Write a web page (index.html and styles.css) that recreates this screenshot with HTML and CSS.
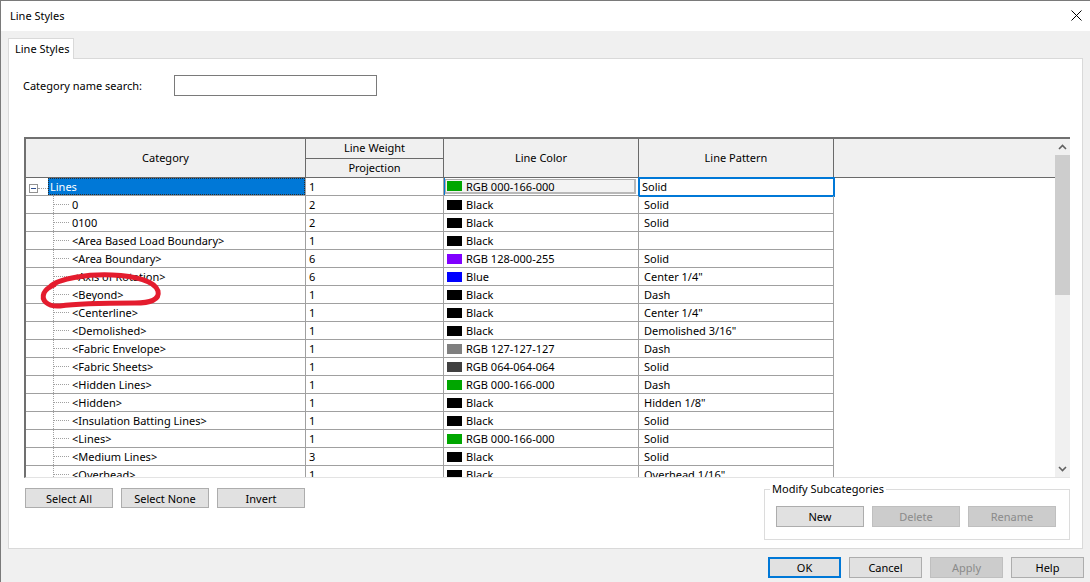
FILE: index.html
```html
<!DOCTYPE html>
<html lang="en">
<head>
  <meta charset="UTF-8" />
  <title>Line Styles</title>
  <link rel="stylesheet" href="styles.css">
</head>
<body>
  <div class="dialog">
    <div class="titlebar">
      <span class="title">Line Styles</span>
      <svg class="close" width="11" height="11" viewBox="0 0 11 11">
        <path d="M0.5 0.5 L10.5 10.5 M10.5 0.5 L0.5 10.5" stroke="#000" stroke-width="1" fill="none"/>
      </svg>
    </div>

    <div class="client">
      <div class="tabstrip">
        <div class="tab">Line Styles</div>
      </div>

      <div class="panel">
        <div class="search">
          <label>Category name search:</label>
          <div class="textbox"></div>
        </div>

        <div class="grid">
          <div class="grid-main">
            <div class="grid-head">
              <div class="th th-cat">Category</div>
              <div class="th th-weight">Line Weight</div>
              <div class="th th-proj">Projection</div>
              <div class="th th-color">Line Color</div>
              <div class="th th-pattern">Line Pattern</div>
              <div class="th th-rest"></div>
            </div>

            <div class="grid-body">
              <div class="row current">
                <div class="td c-cat root">
                  <span class="expander"><span class="minus"></span></span>
                  <span class="connector"></span>
                  <span class="selected">Lines</span>
                </div>
                <div class="td c-weight">1</div>
                <div class="td c-color">
                  <span class="color-btn"><span class="swatch" style="background:#00a600"></span>RGB 000-166-000</span>
                </div>
                <div class="td c-pattern">Solid</div>
              </div>

              <div class="row">
                <div class="td c-cat"><span class="branch"></span><span class="name">0</span></div>
                <div class="td c-weight">2</div>
                <div class="td c-color"><span class="swatch" style="background:#000000"></span>Black</div>
                <div class="td c-pattern">Solid</div>
              </div>
              <div class="row">
                <div class="td c-cat"><span class="branch"></span><span class="name">0100</span></div>
                <div class="td c-weight">2</div>
                <div class="td c-color"><span class="swatch" style="background:#000000"></span>Black</div>
                <div class="td c-pattern">Solid</div>
              </div>
              <div class="row">
                <div class="td c-cat"><span class="branch"></span><span class="name">&lt;Area Based Load Boundary&gt;</span></div>
                <div class="td c-weight">1</div>
                <div class="td c-color"><span class="swatch" style="background:#000000"></span>Black</div>
                <div class="td c-pattern"></div>
              </div>
              <div class="row">
                <div class="td c-cat"><span class="branch"></span><span class="name">&lt;Area Boundary&gt;</span></div>
                <div class="td c-weight">6</div>
                <div class="td c-color"><span class="swatch" style="background:#8000ff"></span>RGB 128-000-255</div>
                <div class="td c-pattern">Solid</div>
              </div>
              <div class="row">
                <div class="td c-cat"><span class="branch"></span><span class="name">&lt;Axis of Rotation&gt;</span></div>
                <div class="td c-weight">6</div>
                <div class="td c-color"><span class="swatch" style="background:#0000ff"></span>Blue</div>
                <div class="td c-pattern">Center 1/4"</div>
              </div>
              <div class="row">
                <div class="td c-cat"><span class="branch"></span><span class="name">&lt;Beyond&gt;</span></div>
                <div class="td c-weight">1</div>
                <div class="td c-color"><span class="swatch" style="background:#000000"></span>Black</div>
                <div class="td c-pattern">Dash</div>
              </div>
              <div class="row">
                <div class="td c-cat"><span class="branch"></span><span class="name">&lt;Centerline&gt;</span></div>
                <div class="td c-weight">1</div>
                <div class="td c-color"><span class="swatch" style="background:#000000"></span>Black</div>
                <div class="td c-pattern">Center 1/4"</div>
              </div>
              <div class="row">
                <div class="td c-cat"><span class="branch"></span><span class="name">&lt;Demolished&gt;</span></div>
                <div class="td c-weight">1</div>
                <div class="td c-color"><span class="swatch" style="background:#000000"></span>Black</div>
                <div class="td c-pattern">Demolished 3/16"</div>
              </div>
              <div class="row">
                <div class="td c-cat"><span class="branch"></span><span class="name">&lt;Fabric Envelope&gt;</span></div>
                <div class="td c-weight">1</div>
                <div class="td c-color"><span class="swatch" style="background:#7f7f7f"></span>RGB 127-127-127</div>
                <div class="td c-pattern">Dash</div>
              </div>
              <div class="row">
                <div class="td c-cat"><span class="branch"></span><span class="name">&lt;Fabric Sheets&gt;</span></div>
                <div class="td c-weight">1</div>
                <div class="td c-color"><span class="swatch" style="background:#404040"></span>RGB 064-064-064</div>
                <div class="td c-pattern">Solid</div>
              </div>
              <div class="row">
                <div class="td c-cat"><span class="branch"></span><span class="name">&lt;Hidden Lines&gt;</span></div>
                <div class="td c-weight">1</div>
                <div class="td c-color"><span class="swatch" style="background:#00a600"></span>RGB 000-166-000</div>
                <div class="td c-pattern">Dash</div>
              </div>
              <div class="row">
                <div class="td c-cat"><span class="branch"></span><span class="name">&lt;Hidden&gt;</span></div>
                <div class="td c-weight">1</div>
                <div class="td c-color"><span class="swatch" style="background:#000000"></span>Black</div>
                <div class="td c-pattern">Hidden 1/8"</div>
              </div>
              <div class="row">
                <div class="td c-cat"><span class="branch"></span><span class="name">&lt;Insulation Batting Lines&gt;</span></div>
                <div class="td c-weight">1</div>
                <div class="td c-color"><span class="swatch" style="background:#000000"></span>Black</div>
                <div class="td c-pattern">Solid</div>
              </div>
              <div class="row">
                <div class="td c-cat"><span class="branch"></span><span class="name">&lt;Lines&gt;</span></div>
                <div class="td c-weight">1</div>
                <div class="td c-color"><span class="swatch" style="background:#00a600"></span>RGB 000-166-000</div>
                <div class="td c-pattern">Solid</div>
              </div>
              <div class="row">
                <div class="td c-cat"><span class="branch"></span><span class="name">&lt;Medium Lines&gt;</span></div>
                <div class="td c-weight">3</div>
                <div class="td c-color"><span class="swatch" style="background:#000000"></span>Black</div>
                <div class="td c-pattern">Solid</div>
              </div>
              <div class="row">
                <div class="td c-cat"><span class="branch"></span><span class="name">&lt;Overhead&gt;</span></div>
                <div class="td c-weight">1</div>
                <div class="td c-color"><span class="swatch" style="background:#000000"></span>Black</div>
                <div class="td c-pattern">Overhead 1/16"</div>
              </div>
            </div>
          </div>

          <div class="vscroll">
            <div class="sb-btn">
              <svg width="9" height="6" viewBox="0 0 9 6"><path d="M1 5 L4.5 1.5 L8 5" stroke="#606060" stroke-width="1.6" fill="none"/></svg>
            </div>
            <div class="sb-thumb"></div>
            <div class="sb-track"></div>
            <div class="sb-btn">
              <svg width="9" height="6" viewBox="0 0 9 6"><path d="M1 1 L4.5 4.5 L8 1" stroke="#606060" stroke-width="1.6" fill="none"/></svg>
            </div>
          </div>
        </div>

        <div class="panel-foot">
          <div class="select-btns">
            <button class="btn wide">Select All</button>
            <button class="btn wide">Select None</button>
            <button class="btn wide">Invert</button>
          </div>
          <fieldset class="group">
            <legend>Modify Subcategories</legend>
            <button class="btn wide tall">New</button>
            <button class="btn wide tall" disabled>Delete</button>
            <button class="btn wide tall" disabled>Rename</button>
          </fieldset>
        </div>
      </div>

      <div class="footer">
        <button class="btn small default">OK</button>
        <button class="btn small">Cancel</button>
        <button class="btn small" disabled>Apply</button>
        <button class="btn small">Help</button>
      </div>
    </div>

    <!-- hand-drawn markup around <Beyond> -->
    <svg class="markup" width="1090" height="582" viewBox="0 0 1090 582">
      <path d="M50 287 C58 278, 90 274, 112 275 C135 276, 155 281, 158 291 C160 300, 150 303, 135 303 C110 303, 80 303, 60 306 C47 307, 41 300, 44 293 C46 289, 49 287, 54 285"
            stroke="#e41c2e" stroke-width="5" fill="none" stroke-linecap="round" stroke-linejoin="round"/>
    </svg>
  </div>
</body>
</html>
```

FILE: styles.css
```css
* {
  box-sizing: border-box;
}

body, html {
  margin: 0;
  padding: 0;
  overflow: hidden;
  font-family: "Noto Sans", "Segoe UI", sans-serif;
  font-size: 11px;
  color: #000;
  background: #f0f0f0;
}

.dialog {
  position: relative;
  width: 1090px;
  height: 582px;
  display: flex;
  flex-direction: column;
  border-top: 1px solid #7a7a7a;
  border-left: 1px solid #7a7a7a;
}

.titlebar {
  height: 30px;
  background: #fff;
  display: flex;
  align-items: center;
  justify-content: space-between;
  padding: 0 8px 1px 9px;
}

.close {
  display: block;
}

.client {
  flex: 1;
  display: flex;
  flex-direction: column;
  background: #f0f0f0;
}

.tabstrip {
  padding: 7px 0 0 7px;
  display: flex;
}

.tab {
  position: relative;
  z-index: 1;
  height: 21px;
  margin-bottom: -1px;
  padding: 2px 4px 0 6px;
  background: #fff;
  border: 1px solid #d9d9d9;
  border-bottom: none;
}

.panel {
  flex: 1;
  margin: 0 7px 0 7px;
  background: #fff;
  border: 1px solid #d9d9d9;
  display: flex;
  flex-direction: column;
}

.search {
  display: flex;
  align-items: center;
  margin-top: 16px;
  padding-left: 14px;
}

.search label {
  width: 151px;
  padding-bottom: 1px;
}

.textbox {
  width: 203px;
  height: 21px;
  border: 1px solid #7a7a7a;
  background: #fff;
}

/* data grid */
.grid {
  display: flex;
  height: 341px;
  margin: 41px 12px 0 15px;
  border-top: 2px solid #707070;
  border-left: 2px solid #707070;
  border-bottom: 1px solid #e3e3e3;
  background: #fff;
}

.grid-main {
  flex: 1;
  overflow: hidden;
}

.grid-head {
  display: grid;
  grid-template-columns: 280px 138px 195px 195px 1fr;
  grid-template-rows: 20px 19px;
  background: #f0f0f0;
}

.th {
  display: flex;
  align-items: center;
  justify-content: center;
  padding-bottom: 2px;
  border-right: 1px solid #6a6a6a;
  border-bottom: 1px solid #6a6a6a;
}

.th-cat { grid-column: 1; grid-row: 1 / 3; }
.th-weight { grid-column: 2; grid-row: 1; }
.th-proj { grid-column: 2; grid-row: 2; }
.th-color { grid-column: 3; grid-row: 1 / 3; }
.th-pattern { grid-column: 4; grid-row: 1 / 3; }
.th-rest { grid-column: 5; grid-row: 1 / 3; border-right: none; }

.row {
  display: grid;
  grid-template-columns: 280px 138px 195px 195px;
  height: 18px;
}

.td {
  display: flex;
  align-items: center;
  white-space: nowrap;
  overflow: hidden;
  border-right: 1px solid #a0a0a0;
  border-bottom: 1px solid #a0a0a0;
}

.c-cat {
  padding-left: 27px;
  align-items: stretch;
}

.branch {
  position: relative;
  width: 16px;
  border-left: 1px dotted #a0a0a0;
}

.branch::after {
  content: "";
  position: absolute;
  left: 0;
  right: 0;
  top: 8px;
  border-top: 1px dotted #a0a0a0;
}

.name {
  align-self: center;
  margin-left: 3px;
}

.c-cat.root {
  padding-left: 3px;
  overflow: visible;
}

.expander {
  width: 9px;
  height: 9px;
  margin-top: 6px;
  border: 1px solid #929292;
  display: flex;
  align-items: center;
  justify-content: center;
}

.minus {
  width: 5px;
  height: 1px;
  background: #2f4f8f;
}

.connector {
  width: 10px;
  margin-top: 10px;
  height: 1px;
  border-top: 1px dotted #a0a0a0;
}

.selected {
  flex: 1;
  display: flex;
  align-items: center;
  padding-left: 2px;
  background: #0078d7;
  color: #fff;
  outline: 1px dotted #2a2a2a;
  outline-offset: -1px;
}

.c-weight {
  padding-left: 3px;
}

.c-color {
  padding-left: 3px;
}

.c-pattern {
  padding-left: 5px;
}

.swatch {
  width: 15px;
  height: 10px;
  margin-right: 4px;
  flex: none;
}

.row.current .c-color {
  padding: 1px 2px 1px 1px;
  box-shadow: inset 1px 0 0 #0078d7;
}

.row.current .c-pattern {
  padding-left: 3px;
  outline: 2px solid #0078d7;
  outline-offset: -1px;
}

.color-btn {
  flex: 1;
  align-self: stretch;
  display: flex;
  align-items: center;
  padding-left: 1px;
  background: #f3f3f3;
  border: 1px solid #adadad;
  border-right: 2px solid #b8b8b8;
  border-bottom: 2px solid #b8b8b8;
}

/* scrollbar */
.vscroll {
  width: 15px;
  display: flex;
  flex-direction: column;
  background: #f0f0f0;
}

.sb-btn {
  height: 16px;
  display: flex;
  align-items: center;
  justify-content: center;
}

.sb-btn svg {
  display: block;
}

.sb-thumb {
  height: 140px;
  background: #cdcdcd;
}

.sb-track {
  flex: 1;
}

/* buttons */
.btn {
  font: inherit;
  color: #000;
  height: 21px;
  padding: 0;
  background: #e1e1e1;
  border: 1px solid #adadad;
}

.btn:disabled {
  background: #cccccc;
  border-color: #bfbfbf;
  color: #8a8a8a;
}

.btn.wide {
  width: 88px;
}

.btn.small {
  width: 73px;
}

.btn.default {
  border: 2px solid #0078d7;
}

.panel-foot {
  display: flex;
  justify-content: space-between;
  align-items: flex-start;
  margin: 3px 12px 0 16px;
}

.select-btns {
  display: flex;
  gap: 8px;
  margin-top: 7px;
}

.select-btns .btn {
  height: 20px;
}

.group {
  margin: 0;
  width: 306px;
  display: flex;
  gap: 8px;
  padding: 9px 13px 12px 11px;
  border: 1px solid #dcdcdc;
}

.group legend {
  margin-left: -6px;
  padding: 0 2px;
  line-height: 16px;
}

.footer {
  height: 33px;
  display: flex;
  justify-content: flex-end;
  gap: 8px;
  padding: 8px 6px 0 0;
}

.markup {
  position: absolute;
  left: -1px;
  top: -1px;
  pointer-events: none;
}
```
